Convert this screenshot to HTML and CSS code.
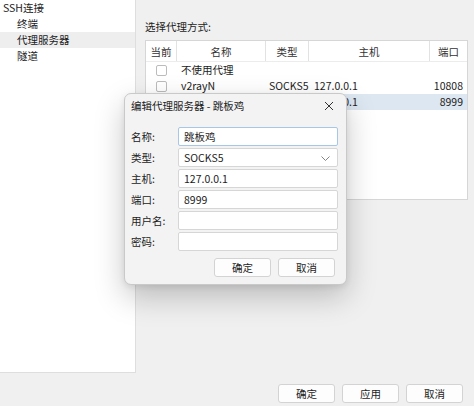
FILE: index.html
```html
<!DOCTYPE html>
<html lang="zh-CN">
<head>
<meta charset="utf-8">
<title>代理服务器</title>
<link rel="stylesheet" href="styles.css">
</head>
<body>
<div class="window">
  <div class="top">
    <div class="tree">
      <div class="item">SSH连接</div>
      <div class="item child">终端</div>
      <div class="item child selected">代理服务器</div>
      <div class="item child">隧道</div>
    </div>
    <div class="pane">
      <div class="caption">选择代理方式:</div>
      <div class="table">
        <div class="row head">
          <div class="cell">当前</div>
          <div class="cell">名称</div>
          <div class="cell">类型</div>
          <div class="cell">主机</div>
          <div class="cell">端口</div>
        </div>
        <div class="row">
          <div class="cell check"><span class="box"></span></div>
          <div class="cell name">不使用代理</div>
          <div class="cell type"></div>
          <div class="cell host"></div>
          <div class="cell port"></div>
        </div>
        <div class="row">
          <div class="cell check"><span class="box"></span></div>
          <div class="cell name">v2rayN</div>
          <div class="cell type">SOCKS5</div>
          <div class="cell host">127.0.0.1</div>
          <div class="cell port">10808</div>
        </div>
        <div class="row sel">
          <div class="cell check"><span class="box"></span></div>
          <div class="cell name">跳板鸡</div>
          <div class="cell type">SOCKS5</div>
          <div class="cell host">127.0.0.1</div>
          <div class="cell port">8999</div>
        </div>
      </div>
    </div>
  </div>
  <div class="actions">
    <button class="btn">确定</button>
    <button class="btn">应用</button>
    <button class="btn">取消</button>
  </div>

  <div class="dialog">
    <div class="titlebar">
      <span class="title">编辑代理服务器 - 跳板鸡</span>
      <svg class="close" width="10" height="10" viewBox="0 0 10 10"><path d="M1 1L9 9M9 1L1 9" stroke="#333" stroke-width="1" fill="none"/></svg>
    </div>
    <div class="form">
      <label>名称:</label>
      <div class="field focus">跳板鸡</div>
      <label>类型:</label>
      <div class="field select">SOCKS5<svg class="chev" width="9" height="5" viewBox="0 0 9 5"><path d="M0.5 0.5L4.5 4.5L8.5 0.5" stroke="#777" stroke-width="0.9" fill="none"/></svg></div>
      <label>主机:</label>
      <div class="field">127.0.0.1</div>
      <label>端口:</label>
      <div class="field">8999</div>
      <label>用户名:</label>
      <div class="field"></div>
      <label>密码:</label>
      <div class="field"></div>
    </div>
    <div class="dlg-actions">
      <button class="btn">确定</button>
      <button class="btn">取消</button>
    </div>
  </div>
</div>
</body>
</html>
```

FILE: styles.css
```css
* { box-sizing: border-box; }
html, body { margin: 0; padding: 0; }
body {
  background: #f0f0f0;
  font-family: "Noto Sans CJK SC", "Noto Sans", sans-serif;
  font-size: 10.5px;
  color: #1c1c1c;
}
.window {
  position: relative;
  width: 474px;
  height: 406px;
  display: grid;
  grid-template-rows: 373px 1fr;
  overflow: hidden;
}
.top { display: flex; }
.tree {
  width: 136px;
  background: #fff;
  border-right: 1px solid #dedede;
  border-bottom: 1px solid #dedede;
}
.item {
  height: 16px;
  line-height: 16px;
  padding-left: 3px;
  color: #222;
}
.item.child { padding-left: 17px; }
.item.selected { background: #eeeeee; }
.pane {
  flex: 1;
  padding: 19px 0 0 9px;
}
.caption { height: 16px; line-height: 16px; margin-bottom: 5px; }
.table {
  width: 323px;
  height: 160px;
  background: #fff;
  border: 1px solid #d6d6d6;
}
.row {
  display: grid;
  grid-template-columns: 31px 89px 43px 121px 37px;
  height: 16px;
  line-height: 16px;
}
.row.head {
  height: 21px;
  line-height: 21px;
  border-bottom: 1px solid #ececec;
}
.row.head .cell {
  text-align: center;
  border-right: 1px solid #e2e2e2;
  color: #333;
}
.row.head .cell:last-child { border-right: none; }
.row.sel { background: #dde7f1; }
.cell { white-space: nowrap; overflow: hidden; }
.check { display: flex; align-items: center; justify-content: center; }
.box {
  width: 11px;
  height: 11px;
  border: 1px solid #bcbcbc;
  border-radius: 2px;
  background: #fff;
}
.name { padding-left: 4px; }
.type { padding-left: 3px; }
.host { padding-left: 5px; }
.port { text-align: right; padding-right: 4px; }

.actions {
  display: flex;
  justify-content: flex-end;
  gap: 7px;
  padding: 11px 11px 0 0;
}
.btn {
  width: 57px;
  height: 19px;
  padding: 0;
  background: #fdfdfd;
  border: 1px solid #d3d3d3;
  border-radius: 3px;
  font: inherit;
  color: #1c1c1c;
  line-height: 17px;
}

.dialog {
  position: absolute;
  left: 124px;
  top: 93px;
  width: 223px;
  height: 192px;
  background: #f3f3f3;
  border: 1px solid #c9c9c9;
  border-radius: 7px;
  box-shadow: 0 12px 30px rgba(0,0,0,0.22), 0 2px 6px rgba(0,0,0,0.08);
  padding: 0 8px 0 6px;
}
.titlebar {
  height: 22px;
  display: flex;
  align-items: center;
  justify-content: space-between;
  padding-top: 1px;
}
.title { font-size: 10.5px; color: #222; }
.close { margin-right: 4px; }
.form {
  margin-top: 11px;
  display: grid;
  grid-template-columns: 47px 160px;
  grid-auto-rows: 19px;
  row-gap: 2px;
}
.form label { line-height: 19px; color: #222; }
.field {
  background: #fff;
  border: 1px solid #d6d6d6;
  border-radius: 2px;
  line-height: 17px;
  padding-left: 5px;
  position: relative;
}
.field.focus { border-color: #a8c6e6; }
.chev { position: absolute; right: 7px; top: 7px; }
.dlg-actions {
  display: flex;
  justify-content: flex-end;
  gap: 7px;
  margin-top: 7px;
  padding-right: 3px;
}
```
